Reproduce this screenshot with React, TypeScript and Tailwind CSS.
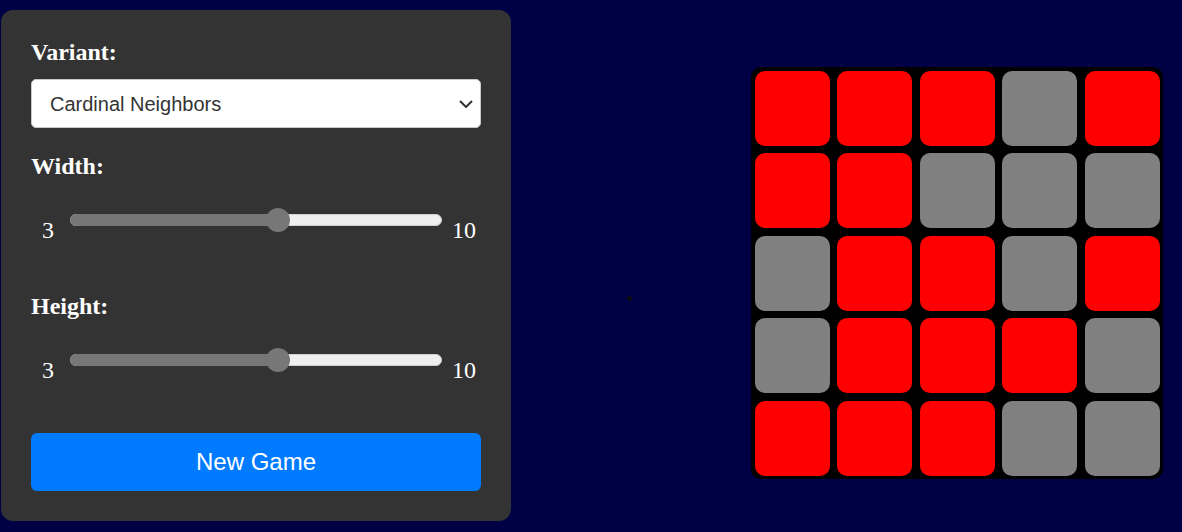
import React from "react";

const grid = [
  "RRRGR",
  "RRGGG",
  "GRRGR",
  "GRRRG",
  "RRRGG",
];

function Slider() {
  const pct = 0.56;
  return (
    <div className="flex items-start mt-[29px] h-[35px]">
      <span className="w-[39px] pl-[11px] mt-[10px] leading-[25px] text-[24px] text-white font-['Liberation_Serif',serif]">3</span>
      <div className="relative w-[372px] h-[24px]">
        <div className="absolute left-0 right-0 top-[6px] h-[12px] rounded-full bg-[#efefef] border border-[#cfcfcf]" />
        <div
          className="absolute left-0 top-[6px] h-[12px] rounded-l-full bg-[#777777]"
          style={{ width: `${pct * 100}%` }}
        />
        <div
          className="absolute top-0 w-[24px] h-[24px] rounded-full bg-[#777777]"
          style={{ left: `calc(${pct * 100}% - 12px)` }}
        />
      </div>
      <span className="ml-[10px] mt-[10px] leading-[25px] text-[24px] text-white font-['Liberation_Serif',serif]">10</span>
    </div>
  );
}

export default function App() {
  return (
    <div className="w-full h-[532px] bg-[#000044] flex items-start overflow-hidden">
      <div className="ml-[1px] mt-[10px] w-[510px] rounded-xl bg-[#333333] p-[30px] flex flex-col">
        <div className="h-[25px] leading-[25px] text-[24px] font-bold text-white font-['Liberation_Serif',serif]">Variant:</div>
        <div className="mt-[14px] h-[49px] rounded-[5px] bg-white border border-[#c8c8c8] flex items-center justify-between pl-[18px] pr-[7px]">
          <span className="text-[20px] text-[#333333] font-['Liberation_Sans',Arial,sans-serif]">Cardinal Neighbors</span>
          <svg width="14" height="8" viewBox="0 0 14 8" fill="none">
            <path d="M1 1 L7 7 L13 1" stroke="#333333" strokeWidth="2" />
          </svg>
        </div>
        <div className="mt-[26px] h-[25px] leading-[25px] text-[24px] font-bold text-white font-['Liberation_Serif',serif]">Width:</div>
        <Slider />
        <div className="mt-[51px] h-[25px] leading-[25px] text-[24px] font-bold text-white font-['Liberation_Serif',serif]">Height:</div>
        <Slider />
        <button className="mt-[50px] h-[58px] rounded-[6px] bg-[#007bff] text-white text-[24px] font-['Liberation_Sans',Arial,sans-serif]">
          New Game
        </button>
      </div>
      <div className="ml-[116px] mt-[296px] w-[5px] h-[5px] rounded-full bg-[#0a0a14]" />
      <div className="ml-[119px] mt-[67px] bg-black rounded-[10px] p-[3.5px] grid grid-cols-5 gap-[7.5px]">
        {grid.flatMap((row, r) =>
          row.split("").map((c, i) => (
            <div
              key={`${r}-${i}`}
              className={`w-[75px] h-[75px] rounded-[10px] ${c === "R" ? "bg-[#ff0000]" : "bg-[#808080]"}`}
            />
          ))
        )}
      </div>
    </div>
  );
}
